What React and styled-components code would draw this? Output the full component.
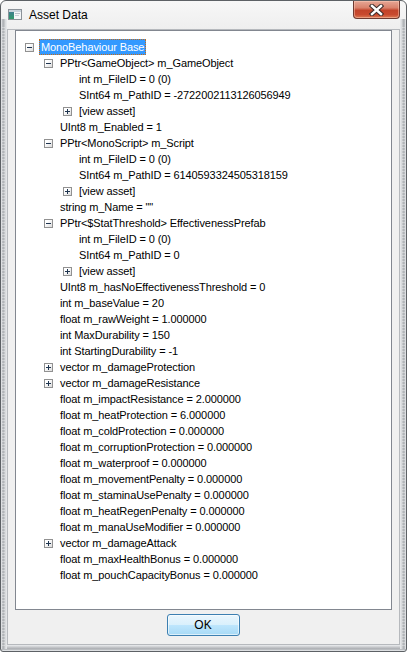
import styled, { createGlobalStyle } from "styled-components";

const GlobalStyle = createGlobalStyle`
    html, body {
        margin: 0;
        padding: 0;
        background: #ffffff;
    }
    * {
        box-sizing: border-box;
    }
`

const rows = [
    { level: 0, toggle: "minus", text: "MonoBehaviour Base", selected: true },
    { level: 1, toggle: "minus", text: "PPtr<GameObject> m_GameObject" },
    { level: 2, text: "int m_FileID = 0 (0)" },
    { level: 2, text: "SInt64 m_PathID = -2722002113126056949" },
    { level: 2, toggle: "plus", text: "[view asset]" },
    { level: 1, text: "UInt8 m_Enabled = 1" },
    { level: 1, toggle: "minus", text: "PPtr<MonoScript> m_Script" },
    { level: 2, text: "int m_FileID = 0 (0)" },
    { level: 2, text: "SInt64 m_PathID = 6140593324505318159" },
    { level: 2, toggle: "plus", text: "[view asset]" },
    { level: 1, text: "string m_Name = \"\"" },
    { level: 1, toggle: "minus", text: "PPtr<$StatThreshold> EffectivenessPrefab" },
    { level: 2, text: "int m_FileID = 0 (0)" },
    { level: 2, text: "SInt64 m_PathID = 0" },
    { level: 2, toggle: "plus", text: "[view asset]" },
    { level: 1, text: "UInt8 m_hasNoEffectivenessThreshold = 0" },
    { level: 1, text: "int m_baseValue = 20" },
    { level: 1, text: "float m_rawWeight = 1.000000" },
    { level: 1, text: "int MaxDurability = 150" },
    { level: 1, text: "int StartingDurability = -1" },
    { level: 1, toggle: "plus", text: "vector m_damageProtection" },
    { level: 1, toggle: "plus", text: "vector m_damageResistance" },
    { level: 1, text: "float m_impactResistance = 2.000000" },
    { level: 1, text: "float m_heatProtection = 6.000000" },
    { level: 1, text: "float m_coldProtection = 0.000000" },
    { level: 1, text: "float m_corruptionProtection = 0.000000" },
    { level: 1, text: "float m_waterproof = 0.000000" },
    { level: 1, text: "float m_movementPenalty = 0.000000" },
    { level: 1, text: "float m_staminaUsePenalty = 0.000000" },
    { level: 1, text: "float m_heatRegenPenalty = 0.000000" },
    { level: 1, text: "float m_manaUseModifier = 0.000000" },
    { level: 1, toggle: "plus", text: "vector m_damageAttack" },
    { level: 1, text: "float m_maxHealthBonus = 0.000000" },
    { level: 1, text: "float m_pouchCapacityBonus = 0.000000" },
]

const AppIcon = () => (
    <svg width="14" height="11" viewBox="0 0 14 11">
        <defs>
            <linearGradient id="side" x1="0" y1="0" x2="0" y2="1">
                <stop offset="0" stopColor="#3f7f8f" />
                <stop offset="1" stopColor="#2f9a6a" />
            </linearGradient>
        </defs>
        <rect x="0.5" y="0.5" width="13" height="10" fill="#f4f6f8" stroke="#8b9299" />
        <rect x="1" y="1" width="12" height="2" fill="#c9d3dc" />
        <rect x="1" y="3" width="5" height="7" fill="url(#side)" />
        <rect x="7" y="4" width="5" height="1" fill="#b9c2ca" />
        <rect x="7" y="6" width="4" height="1" fill="#c9d0d6" />
    </svg>
)

const CloseGlyph = () => (
    <svg width="15" height="12" viewBox="0 0 15 12">
        <path d="M3 2 L12 10 M12 2 L3 10" stroke="#3a2a28" strokeWidth="4.4" strokeLinecap="square" />
        <path d="M3 2 L12 10 M12 2 L3 10" stroke="#ffffff" strokeWidth="2.4" strokeLinecap="square" />
    </svg>
)

const Expander = ({ kind }) => (
    <StyledExpander>
        <svg width="9" height="9" viewBox="0 0 9 9">
            <rect x="2" y="4" width="5" height="1" fill="#1f3550" />
            {kind === "plus" && <rect x="4" y="2" width="1" height="5" fill="#1f3550" />}
        </svg>
    </StyledExpander>
)

const TreeRow = ({ level, toggle, text, selected }) => {
    return (
        <StyledRow $level={level}>
            <StyledToggleSlot>{toggle && <Expander kind={toggle} />}</StyledToggleSlot>
            <StyledLabel $selected={selected}>{text}</StyledLabel>
        </StyledRow>
    )
}

const App = () => {
    return (
        <>
            <GlobalStyle />
            <StyledWindow>
                <StyledTitleBar>
                    <AppIcon />
                    <StyledTitle>Asset Data</StyledTitle>
                </StyledTitleBar>
                <StyledClose><CloseGlyph /></StyledClose>
                <StyledClient>
                    <StyledTree>
                        {rows.map((row, i) => (
                            <TreeRow key={i} {...row} />
                        ))}
                    </StyledTree>
                    <StyledFooter>
                        <StyledButton>OK</StyledButton>
                    </StyledFooter>
                </StyledClient>
            </StyledWindow>
        </>
    )
}

const StyledWindow = styled.div`
    position: relative;
    width: 407px;
    height: 652px;
    display: flex;
    flex-direction: column;
    padding: 0 6px 6px;
    border: 1px solid #5d6165;
    border-radius: 6px 6px 3px 3px;
    background:
        repeating-linear-gradient(to bottom, rgba(255,255,255,0) 0, rgba(255,255,255,0) 2px, rgba(255,255,255,0.35) 2px, rgba(255,255,255,0.35) 3px) 1px 24px / 3px calc(100% - 28px) no-repeat,
        linear-gradient(to right, #eef0f2 0, #a9acb0 2px, #b9bcbf 3px, #e4e6e8 5px) 0 18px / 6px calc(100% - 20px) no-repeat,
        repeating-linear-gradient(to bottom, rgba(255,255,255,0) 0, rgba(255,255,255,0) 2px, rgba(255,255,255,0.35) 2px, rgba(255,255,255,0.35) 3px) right 1px top 24px / 3px calc(100% - 28px) no-repeat,
        linear-gradient(to left, #eef0f2 0, #a9acb0 2px, #b9bcbf 3px, #e4e6e8 5px) right 0 top 18px / 6px calc(100% - 20px) no-repeat,
        linear-gradient(to top, #eef0f2 0, #a9acb0 2px, #c9cbce 4px, #eceef0 6px) 0 100% / 100% 6px no-repeat,
        linear-gradient(to bottom, #f7f7f7 0, #eeeeee 30px, #e9eaec 100%);
    font-family: "Liberation Sans", Arial, sans-serif;
`

const StyledTitleBar = styled.div`
    height: 28px;
    display: flex;
    align-items: center;
    gap: 7px;
    padding: 0 0 0 1px;
    padding-bottom: 1px;
`

const StyledTitle = styled.span`
    font-size: 12px;
    color: #000000;
    line-height: 14px;
`

const StyledClose = styled.div`
    position: absolute;
    top: 0;
    right: 6px;
    width: 47px;
    height: 18px;
    display: flex;
    align-items: center;
    justify-content: center;
    border: 1px solid #6e3a31;
    border-top: none;
    border-radius: 0 0 4px 4px;
    background: linear-gradient(to bottom, #e6a796 0%, #d9826c 40%, #c2432a 55%, #c94a2f 80%, #dc7a55 100%);
    box-shadow: inset 0 0 0 1px rgba(255, 210, 190, 0.45);
`

const StyledClient = styled.div`
    flex: 1;
    display: flex;
    flex-direction: column;
    border: 1px solid #b6b9bd;
    background: #f0f0f0;
`

const StyledTree = styled.div`
    flex: 1;
    margin: 0 7px;
    padding: 8px 0 0 0;
    border: 1px solid #828790;
    background: #ffffff;
    font-family: "Liberation Sans", Arial, sans-serif;
    font-size: 11px;
    letter-spacing: -0.1px;
    color: #000000;
    overflow: hidden;
`

const StyledRow = styled.div`
    display: flex;
    align-items: center;
    height: 16px;
    padding-left: ${p => p.$level * 19}px;
`

const StyledToggleSlot = styled.div`
    width: 23px;
    height: 16px;
    flex: none;
    display: flex;
    align-items: center;
    padding: 0 0 0 9px;
`

const StyledExpander = styled.div`
    width: 9px;
    height: 9px;
    border: 1px solid #919191;
    background: linear-gradient(135deg, #ffffff 30%, #dcdcdc 100%);
    display: flex;
    align-items: center;
    justify-content: center;
    svg {
        display: block;
        flex: none;
    }
`

const StyledLabel = styled.span`
    height: 16px;
    line-height: 14px;
    padding: 0 1px;
    white-space: nowrap;
    border: 1px solid ${p => p.$selected ? "transparent" : "transparent"};
    ${p => p.$selected && `
        background: #3399ff;
        color: #ffffff;
        border: 1px dotted #c96a12;
    `}
`

const StyledFooter = styled.div`
    display: flex;
    justify-content: center;
    padding: 4px 0 8px;
`

const StyledButton = styled.button`
    width: 73px;
    height: 22px;
    margin-left: -1px;
    padding: 0;
    border: 1px solid #3c7fb1;
    border-radius: 3px;
    background: linear-gradient(to bottom, #eaf6fd 0%, #d9f0fc 50%, #bee6fd 50%, #a7d9f5 100%);
    box-shadow: inset 0 0 0 1px rgba(255, 255, 255, 0.6);
    font-family: "Liberation Sans", Arial, sans-serif;
    font-size: 12px;
    color: #000000;
`

export default App
